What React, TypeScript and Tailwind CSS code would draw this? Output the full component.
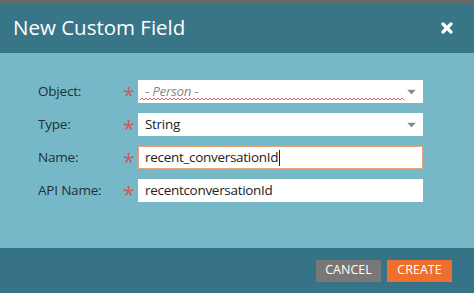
import React from "react";

function Caret() {
  return (
    <svg width="9" height="5" viewBox="0 0 9 5" className="absolute right-[7px] top-1/2 -translate-y-1/2">
      <path d="M0 0 L9 0 L4.5 5 Z" fill="#8a8a8a" />
    </svg>
  );
}

function Row({ label, children }: { label: string; children: React.ReactNode }) {
  return (
    <div className="flex items-center h-[23px]">
      <div className="w-[85px] text-[13.5px] tracking-[-0.2px] text-[#1e3038]">{label}</div>
      <div className="w-[15px] flex items-center justify-start pt-[7px] text-[21px] leading-none text-[#d4575a]">*</div>
      {children}
    </div>
  );
}

export default function App() {
  return (
    <div className="w-[474px] h-[293px] flex flex-col overflow-hidden" style={{ fontFamily: '"Open Sans", sans-serif' }}>
      <div className="h-[3px] bg-[#6a6a6a]" />
      <div className="h-[50px] bg-[#377587] flex items-center justify-between pl-[13px] pr-[21px]">
        <div className="text-white text-[20.5px] leading-none pb-[1px]">New Custom Field</div>
        <svg width="12" height="12" viewBox="0 0 12 12">
          <path d="M2 2 L10 10 M10 2 L2 10" stroke="white" strokeWidth="3.2" strokeLinecap="round" />
        </svg>
      </div>
      <div className="flex-1 bg-[#76b8c8] pt-[27px] pl-[38px] flex flex-col gap-[10px]">
        <Row label="Object:">
          <div className="relative w-[285px] h-[23px] bg-white flex items-center pl-[7px] text-[13.5px] tracking-[-0.3px] italic text-[#888]">
            - Person -
            <svg className="absolute left-[2px] bottom-[2px]" width="264" height="4" viewBox="0 0 264 4">
              <defs>
                <pattern id="wv" width="4" height="4" patternUnits="userSpaceOnUse">
                  <path d="M0 3 L2 1 L4 3" stroke="#e0605a" strokeWidth="1" fill="none" />
                </pattern>
              </defs>
              <rect width="264" height="4" fill="url(#wv)" />
            </svg>
            <Caret />
          </div>
        </Row>
        <Row label="Type:">
          <div className="relative w-[285px] h-[23px] bg-white flex items-center pl-[7px] text-[13.5px] tracking-[-0.3px] text-[#222]">
            String
            <Caret />
          </div>
        </Row>
        <Row label="Name:">
          <div className="w-[285px] h-[23px] bg-white border border-[#e3a57c] flex items-center pl-[6px] text-[13.5px] tracking-[-0.3px] text-[#222]">
            recent_conversationId
            <span className="inline-block w-[1px] h-[16px] bg-[#222] ml-[1px]" />
          </div>
        </Row>
        <Row label="API Name:">
          <div className="w-[285px] h-[23px] bg-white flex items-center pl-[7px] text-[13.5px] tracking-[-0.3px] text-[#222]">
            recentconversationId
          </div>
        </Row>
      </div>
      <div className="h-[45px] bg-[#367386] flex items-center justify-end gap-[6px] pr-[22px]">
        <button className="w-[65px] h-[22px] bg-[#787878] text-white text-[12.5px] font-medium leading-none">CANCEL</button>
        <button className="w-[65px] h-[22px] bg-[#ef6f2e] text-white text-[12.5px] font-medium leading-none">CREATE</button>
      </div>
    </div>
  );
}
